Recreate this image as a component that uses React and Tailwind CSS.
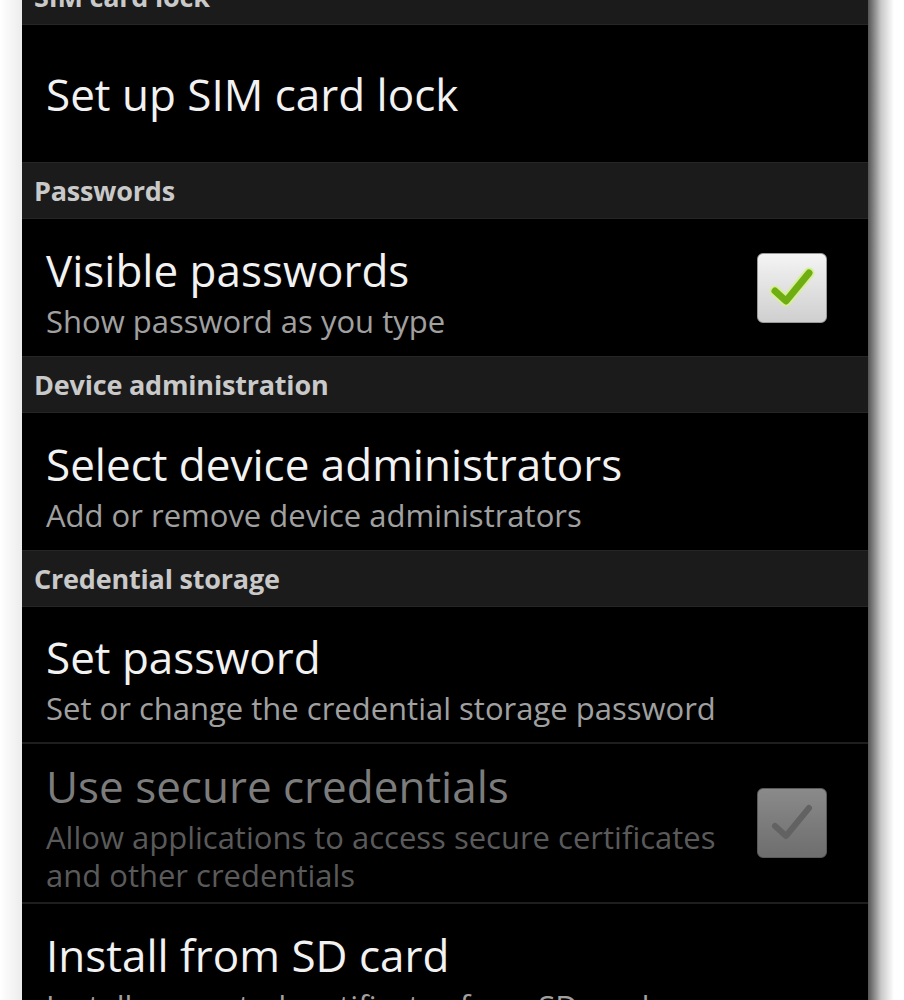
import { Fragment } from 'react';

const rows = [
  { type: 'header', label: 'SIM card lock' },
  { type: 'item', title: 'Set up SIM card lock' },
  { type: 'header', label: 'Passwords' },
  { type: 'item', title: 'Visible passwords', summary: ['Show password as you type'], checkbox: 'on' },
  { type: 'header', label: 'Device administration' },
  { type: 'item', title: 'Select device administrators', summary: ['Add or remove device administrators'] },
  { type: 'header', label: 'Credential storage' },
  { type: 'item', title: 'Set password', summary: ['Set or change the credential storage password'], divider: true },
  {
    type: 'item',
    title: 'Use secure credentials',
    summary: ['Allow applications to access secure certificates', 'and other credentials'],
    checkbox: 'disabled',
    disabled: true,
    divider: true,
  },
  { type: 'item', title: 'Install from SD card', summary: ['Install encrypted certificates from SD card'] },
];

function CheckBox({ state }) {
  const disabled = state === 'disabled';
  return (
    <div
      className={`w-[70px] h-[70px] shrink-0 rounded-[6px] flex items-center justify-center ${
        disabled
          ? 'bg-gradient-to-b from-[#8a8a8a] to-[#6e6e6e] border border-[#5a5a5a]'
          : 'bg-gradient-to-b from-[#f4f4f4] to-[#cfcfcf] border border-[#9a9a9a]'
      }`}
    >
      <svg width="50" height="50" viewBox="0 0 50 50">
        {disabled ? (
          <path
            d="M8 28 L19 38 L42 10"
            fill="none"
            stroke="#626262"
            strokeWidth="6"
            strokeLinecap="round"
            strokeLinejoin="round"
          />
        ) : (
          <>
            <path
              d="M8 28 L19 38 L42 10"
              fill="none"
              stroke="#d8ef9a"
              strokeWidth="11"
              strokeLinecap="round"
              strokeLinejoin="round"
            />
            <path
              d="M8 28 L19 38 L42 10"
              fill="none"
              stroke="#6fae12"
              strokeWidth="7"
              strokeLinecap="round"
              strokeLinejoin="round"
            />
          </>
        )}
      </svg>
    </div>
  );
}

function Header({ label }) {
  return (
    <div className="h-[57px] bg-[#1b1b1b] border-y border-[#262626] flex items-center pl-[12px] pt-[2px]">
      <span className="text-[27px] font-bold text-[#c9c9c9] tracking-[-0.2px]">{label}</span>
    </div>
  );
}

function Item({ item }) {
  const tall = item.summary && item.summary.length > 1;
  return (
    <div
      className={`${tall ? 'h-[160px]' : 'h-[137px]'} flex items-center pl-[24px] pr-[41px] ${
        item.divider ? 'border-b-2 border-[#1e1e1e]' : ''
      }`}
    >
      <div className={`flex-1 min-w-0 ${item.summary ? 'pt-[8px]' : ''}`}>
        <div
          className={`text-[44px] leading-[52px] ${
            item.disabled ? 'text-[#7c7c7c]' : 'text-[#f2f2f2]'
          }`}
        >
          {item.title}
        </div>
        {item.summary && (
          <div
            className={`text-[31px] leading-[38px] mt-[6px] ${
              item.disabled ? 'text-[#5a5a5a]' : 'text-[#a0a0a0]'
            }`}
          >
            {item.summary.map((line) => (
              <div key={line}>{line}</div>
            ))}
          </div>
        )}
      </div>
      {item.checkbox && <CheckBox state={item.checkbox} />}
    </div>
  );
}

export default function App() {
  return (
    <div
      className="h-[1000px] overflow-hidden bg-white flex"
      style={{ fontFamily: '"Open Sans", "Noto Sans", sans-serif' }}
    >
      <div className="w-[22px] shrink-0 bg-gradient-to-r from-white to-[#ececec]" />
      <div className="w-[846px] shrink-0 bg-black">
        <div className="-mt-[32px]">
          {rows.map((row, i) => (
            <Fragment key={i}>
              {row.type === 'header' ? <Header label={row.label} /> : <Item item={row} />}
            </Fragment>
          ))}
        </div>
      </div>
      <div className="w-[26px] shrink-0 bg-gradient-to-r from-[#555] via-[#c8c8c8] to-white" />
      <div className="flex-1" />
    </div>
  );
}
